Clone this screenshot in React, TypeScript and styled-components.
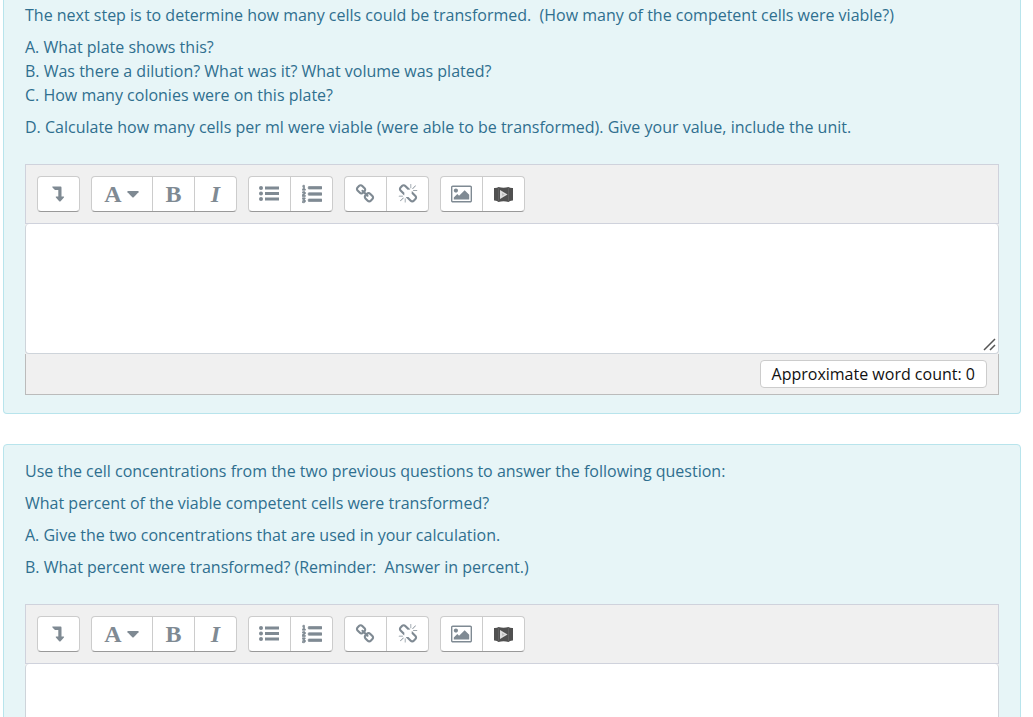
import React, { useState } from 'react';
import styled, { createGlobalStyle } from 'styled-components';
import { FaListOl } from 'react-icons/fa';

const GlobalStyle = createGlobalStyle`
  *, *::before, *::after { box-sizing: border-box; }
  body {
    margin: 0;
    background: #fff;
    font-family: 'Open Sans', 'Noto Sans', sans-serif;
    font-size: 16px;
    line-height: 24px;
  }
`;

const Page = styled.main`
  display: flex;
  flex-direction: column;
  gap: 30px;
  height: 100vh;
  padding: 0 12px 0 3px;
  overflow: hidden;
`;

const Card = styled.section<{ $continued?: boolean }>`
  flex: none;
  padding: ${(p) => (p.$continued ? '3px' : '14px')} 21px 18px;
  color: #2f6f8f;
  background: #e7f5f7;
  border: 1px solid #b8e4ec;
  border-radius: ${(p) => (p.$continued ? '0 0 4px 4px' : '4px')};
  border-top-width: ${(p) => (p.$continued ? '0' : '1px')};
`;

const Prompt = styled.div`
  margin-bottom: 25px;
`;

const Paragraph = styled.p`
  margin: 0;
  white-space: pre-wrap;

  & + & {
    margin-top: 8px;
  }
`;

const Editor = styled.div`
  background: #f0f0f0;
`;

const Toolbar = styled.div`
  display: flex;
  flex-wrap: wrap;
  gap: 11px;
  padding: 11px;
  border: 1px solid #cfd2dc;
`;

const ButtonGroup = styled.div`
  display: flex;
  height: 36px;
  background: #fff;
  border: 1px solid #ccc;
  border-bottom-color: #999;
  border-radius: 4px;
`;

const ToolButton = styled.button<{ $wide?: boolean }>`
  display: flex;
  align-items: center;
  justify-content: center;
  gap: 5px;
  width: ${(p) => (p.$wide ? '60px' : '41px')};
  padding: 0 1px 0 0;
  color: #7f8a93;
  background: none;
  border: 0;
  cursor: pointer;

  & + & {
    width: 42px;
    padding: 0;
    border-left: 1px solid #ccc;
  }

  svg {
    display: block;
    fill: currentColor;
  }
`;

const Letter = styled.span<{ $italic?: boolean }>`
  font: ${(p) => (p.$italic ? 'italic' : 'normal')} bold 24px/32px 'Liberation Serif', serif;
`;

const AnswerArea = styled.div`
  position: relative;

  > svg {
    position: absolute;
    right: 3px;
    bottom: 3px;
    pointer-events: none;
  }
`;

const AnswerBox = styled.textarea`
  display: block;
  width: 100%;
  height: 130px;
  padding: 6px 12px;
  font: inherit;
  color: #495057;
  background: #fff;
  border: 1px solid #ced4da;
  border-top: 0;
  border-radius: 4px;
  outline: 0;
  resize: vertical;

  &::-webkit-resizer {
    background: transparent;
  }
`;

const StatusBar = styled.div`
  display: flex;
  justify-content: flex-end;
  padding: 6px 11px;
  border: 1px solid #bbb;
  border-top: 0;
`;

const WordCount = styled.output`
  padding: 1px 11px;
  color: #111;
  background: #fff;
  border: 1px solid #ccc;
  border-radius: 4px;
`;

const MoreIcon = () => (
  <svg width="13" height="16" viewBox="0 0 13 16">
    <path d="M.6.5h8q.9 0 .9.900V10.500h2q1 0 .4.900L8.600 15.200q-.7.700-1.400 0L3.900 11.400q-.6-.9.400-.9h2V4H3.200q-.5 0-.8-.4L.3 1.200Q0 .5.600.5z" />
  </svg>
);

const CaretIcon = () => (
  <svg width="12" height="8" viewBox="0 0 12 8">
    <path d="M.8 1h10.400q.8.500.3 1.200L6.700 7.200q-.7.600-1.400 0L.5 2.200Q0 1.500.8 1z" />
  </svg>
);

const BulletsIcon = () => (
  <svg width="20" height="18" viewBox="0 0 20 18">
    <circle cx="2" cy="3" r="2" />
    <circle cx="2" cy="8.500" r="2" />
    <circle cx="2" cy="14" r="2" />
    <path d="M6 1.500h14v3H6zM6 7h14v3H6zM6 12.500h14v3H6z" />
  </svg>
);

const LinkIcon = () => (
  <svg width="20" height="20" viewBox="0 0 1792 1792">
    <path d="M1520 1216q0-40-28-68l-208-208q-28-28-68-28-42 0-72 32 3 3 19 18.500t21.500 21.500 15 19 13 25.500 3.500 27.500q0 40-28 68t-68 28q-15 0-27.500-3.500t-25.500-13-19-15-21.500-21.500-18.500-19q-33 31-33 73 0 40 28 68l206 207q27 27 68 27 40 0 68-26l147-146q28-28 28-67zm-703-705q0-40-28-68l-206-207q-28-28-68-28-39 0-68 27l-147 146q-28 28-28 67 0 40 28 68l208 208q27 27 68 27 42 0 72-31-3-3-19-18.500t-21.500-21.500-15-19-13-25.500-3.500-27.500q0-40 28-68t68-28q15 0 27.500 3.500t25.500 13 19 15 21.500 21.500 18.500 19q33-31 33-73zm895 705q0 120-85 203l-147 146q-83 83-203 83-121 0-204-85l-206-207q-83-83-83-203 0-123 88-209l-88-88q-86 88-208 88-120 0-204-84l-208-208q-84-84-84-204t85-203l147-146q83-83 203-83 121 0 204 85l206 207q83 83 83 203 0 123-88 209l88 88q86-88 208-88 120 0 204 84l208 208q84 84 84 204z" />
  </svg>
);

const UnlinkIcon = () => (
  <svg width="20" height="20" viewBox="0 0 1792 1792">
    <path d="M503 1271l-256 256q-10 9-23 9-12 0-23-9-9-10-9-23t9-23l256-256q10-9 23-9t23 9q9 10 9 23t-9 23zm169 41v320q0 14-9 23t-23 9-23-9-9-23v-320q0-14 9-23t23-9 23 9 9 23zm-224-224q0 14-9 23t-23 9h-320q-14 0-23-9t-9-23 9-23 23-9h320q14 0 23 9t9 23zm1264 128q0 120-85 203l-147 146q-83 83-203 83-121 0-204-85l-334-335q-21-21-42-56l239-18 273 274q28 28 68 27.500t68-27.500l147-146q28-28 28-67 0-40-28-68l-274-275 18-239q35 21 56 42l336 336q84 86 84 204zm-617-724l-239 18-273-274q-28-28-68-28-39 0-68 27l-147 146q-28 28-28 67 0 40 28 68l274 274-18 240q-35-21-56-42l-336-336q-84-86-84-204 0-120 85-203l147-146q83-83 203-83 121 0 204 85l334 335q21 21 42 56zm633 84q0 14-9 23t-23 9h-320q-14 0-23-9t-9-23 9-23 23-9h320q14 0 23 9t9 23zm-544-544v320q0 14-9 23t-23 9-23-9-9-23v-320q0-14 9-23t23-9 23 9 9 23zm407 151l-256 256q-11 9-23 9t-23-9q-9-10-9-23t9-23l256-256q10-9 23-9t23 9q9 10 9 23t-9 23z" />
  </svg>
);

const ImageIcon = () => (
  <svg width="21" height="20" viewBox="-64 0 1920 1792">
    <path d="M576 576q0 80-56 136t-136 56-136-56-56-136 56-136 136-56 136 56 56 136zm1024 384v448h-1408v-192l320-320 160 160 512-512zm96-704h-1600q-13 0-22.500 9.500t-9.500 22.500v1216q0 13 9.500 22.500t22.500 9.500h1600q13 0 22.500-9.500t9.500-22.500v-1216q0-13-9.500-22.500t-22.500-9.500zm160 32v1216q0 66-47 113t-113 47h-1600q-66 0-113-47t-47-113v-1216q0-66 47-113t113-47h1600q66 0 113 47t47 113z" />
  </svg>
);

const MediaIcon = () => (
  <svg width="19" height="15" viewBox="0 0 19 15">
    <path fill="#505050" d="M0 1Q3 1.200 4.500 0q5 1.600 10 0Q16 1.200 19 1v12.500q-3-.2-4.500 1.500-5-1.600-10 0Q3 13.300 0 13.500z" />
    <path fill="none" stroke="#606060" d="M4.500.5v14M14.500.5v14" />
    <path fill="#ddd" d="M6 3l7.500 4.500L6 12z" />
    <path fill="#bbb" d="M8 6l3 1.500L8 9z" />
  </svg>
);

const GripIcon = () => (
  <svg width="13" height="13" viewBox="0 0 13 13" fill="none" stroke="#555" strokeWidth="1.500">
    <path d="M1 12L12 1M7 12l5-5" />
  </svg>
);

interface AnswerEditorProps {
  label: string;
  showWordCount?: boolean;
}

function AnswerEditor({ label, showWordCount }: AnswerEditorProps) {
  const [answer, setAnswer] = useState('');
  const words = answer.trim() ? answer.trim().split(/\s+/).length : 0;

  return (
    <Editor>
      <Toolbar role="toolbar" aria-label="Formatting">
        <ButtonGroup>
          <ToolButton type="button" aria-label="Show more buttons"><MoreIcon /></ToolButton>
        </ButtonGroup>
        <ButtonGroup>
          <ToolButton type="button" aria-label="Paragraph styles" $wide>
            <Letter>A</Letter>
            <CaretIcon />
          </ToolButton>
          <ToolButton type="button" aria-label="Bold"><Letter>B</Letter></ToolButton>
          <ToolButton type="button" aria-label="Italic"><Letter $italic>I</Letter></ToolButton>
        </ButtonGroup>
        <ButtonGroup>
          <ToolButton type="button" aria-label="Unordered list"><BulletsIcon /></ToolButton>
          <ToolButton type="button" aria-label="Ordered list"><FaListOl size={20} strokeWidth={18} /></ToolButton>
        </ButtonGroup>
        <ButtonGroup>
          <ToolButton type="button" aria-label="Link"><LinkIcon /></ToolButton>
          <ToolButton type="button" aria-label="Unlink"><UnlinkIcon /></ToolButton>
        </ButtonGroup>
        <ButtonGroup>
          <ToolButton type="button" aria-label="Insert image"><ImageIcon /></ToolButton>
          <ToolButton type="button" aria-label="Insert media"><MediaIcon /></ToolButton>
        </ButtonGroup>
      </Toolbar>
      <AnswerArea>
        <AnswerBox aria-label={label} value={answer} onChange={(e) => setAnswer(e.target.value)} />
        <GripIcon />
      </AnswerArea>
      {showWordCount && (
        <StatusBar>
          <WordCount>Approximate word count: {words}</WordCount>
        </StatusBar>
      )}
    </Editor>
  );
}

export default function App() {
  return (
    <>
      <GlobalStyle />
      <Page>
        <Card $continued>
          <Prompt>
            <Paragraph>
              {'The next step is to determine how many cells could be transformed.  (How many of the competent cells were viable?)'}
            </Paragraph>
            <Paragraph>
              A. What plate shows this?
              <br />
              B. Was there a dilution? What was it? What volume was plated?
              <br />
              C. How many colonies were on this plate?
            </Paragraph>
            <Paragraph>
              D. Calculate how many cells per ml were viable (were able to be transformed). Give your value, include the unit.
            </Paragraph>
          </Prompt>
          <AnswerEditor label="Viable cells answer" showWordCount />
        </Card>
        <Card>
          <Prompt>
            <Paragraph>Use the cell concentrations from the two previous questions to answer the following question:</Paragraph>
            <Paragraph>What percent of the viable competent cells were transformed?</Paragraph>
            <Paragraph>A. Give the two concentrations that are used in your calculation.</Paragraph>
            <Paragraph>{'B. What percent were transformed? (Reminder:  Answer in percent.)'}</Paragraph>
          </Prompt>
          <AnswerEditor label="Percent transformed answer" />
        </Card>
      </Page>
    </>
  );
}
